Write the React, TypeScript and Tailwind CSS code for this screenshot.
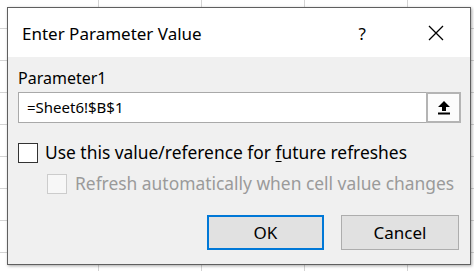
import React from "react";

const font = { fontFamily: '"Noto Sans", "Open Sans", sans-serif' };

function UploadIcon() {
  return (
    <svg width="14" height="15" viewBox="0 0 14 15">
      <path d="M7 1 L13 7 L9 7 L9 11 L5 11 L5 7 L1 7 Z" fill="#000" />
      <rect x="1" y="12.5" width="12" height="2" fill="#000" />
    </svg>
  );
}

export default function App() {
  const cells = Array.from({ length: 5 * 10 });
  return (
    <div className="relative w-[474px] h-[271px] overflow-hidden bg-white" style={font}>
      <div className="-ml-[4px] -mt-[3px] grid grid-cols-[repeat(5,103px)] auto-rows-[32px]">
        {cells.map((_, i) => (
          <div key={i} className="border-r border-b border-[#d4d4d4]" />
        ))}
      </div>
      <div className="absolute left-[7px] top-[7px] w-[464px] h-[258px] border border-[#5f5f5f] shadow-[1px_1px_3px_rgba(0,0,0,0.35)] bg-[#f0f0f0] flex flex-col">
        <div className="h-[49px] bg-white flex items-center pl-[14px] pr-[26px]">
          <span className="text-[17px] text-black leading-none pt-[2px]">Enter Parameter Value</span>
          <span className="ml-auto text-[17px] leading-none text-black mr-[62px] pt-[2px]">?</span>
          <svg width="16" height="16" viewBox="0 0 16 16">
            <path d="M1 1 L15 15 M15 1 L1 15" stroke="#000" strokeWidth="1.3" />
          </svg>
        </div>
        <div className="flex flex-col pl-[10px] pr-[10px]">
          <div className="mt-[13px] text-[16px] leading-none text-black">Parameter1</div>
          <div className="mt-[6px] h-[31px] w-[443px] border border-[#a9a9a9] bg-white flex items-center">
            <span className="pl-[8px] text-[15px] text-black leading-none">=Sheet6!$B$1</span>
            <div className="ml-auto h-[31px] w-[35px] -mr-[1px] border-2 border-[#b4b4b4] bg-[#fcfcfc] flex items-center justify-center">
              <UploadIcon />
            </div>
          </div>
          <div className="mt-[20px] flex items-center">
            <div className="w-[20px] h-[20px] border-[1.5px] border-[#333] bg-white" />
            <span className="ml-[7px] text-[17.4px] leading-none text-black">
              Use this value/reference for <span className="underline underline-offset-2">f</span>uture refreshes
            </span>
          </div>
          <div className="mt-[11px] ml-[29px] flex items-center">
            <div className="w-[20px] h-[20px] border border-[#cccccc] bg-[#f7f7f7]" />
            <span className="ml-[8px] text-[17.4px] leading-none text-[#9a9a9a]">
              Refresh automatically when cell value changes
            </span>
          </div>
          <div className="mt-[21px] flex justify-end gap-[17px] pr-[1px]">
            <button className="w-[117px] h-[35px] border-2 border-[#0078d7] bg-[#e1e1e1] text-[17px] text-black">
              OK
            </button>
            <button className="w-[118px] h-[35px] border border-[#adadad] bg-[#e1e1e1] text-[17px] text-black">
              Cancel
            </button>
          </div>
        </div>
      </div>
    </div>
  );
}
